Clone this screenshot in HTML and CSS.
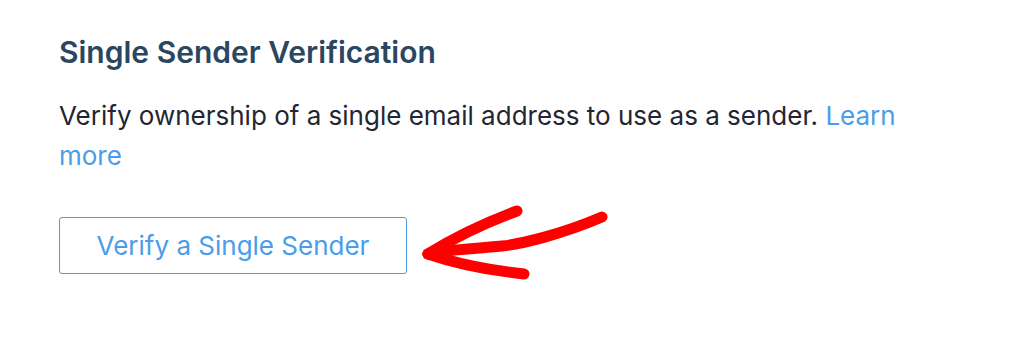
FILE: index.html
```html
<!DOCTYPE html>
<html lang="en">
<head>
<meta charset="utf-8">
<link rel="stylesheet" href="styles.css">
</head>
<body>
<main class="panel">
  <h2 class="title">Single Sender Verification</h2>
  <p class="desc">Verify ownership of a single email address to use as a sender. <a class="link" href="#">Learn more</a></p>
  <div class="action">
    <button class="btn" type="button">Verify a Single Sender</button>
    <svg class="arrow" width="200" height="90" viewBox="0 0 200 90" aria-hidden="true">
      <path d="M190 23 C150 40 110 50 90 52 C60 55 30 56 16 60" />
      <path d="M16 60 C40 45 70 30 105 17" />
      <path d="M16 60 C45 70 75 76 112 80" />
    </svg>
  </div>
</main>
</body>
</html>
```

FILE: styles.css
```css
html, body {
  margin: 0;
  padding: 0;
  background: #ffffff;
}
body {
  font-family: Inter, "Noto Sans", sans-serif;
  width: 1024px;
  height: 349px;
  overflow: hidden;
}
.panel {
  padding: 32px 0 0 59px;
  width: 860px;
}
.title {
  margin: 0;
  font-size: 30px;
  font-weight: 600;
  line-height: 40px;
  color: #2b4660;
}
.desc {
  margin: 24px 0 0;
  font-size: 26px;
  line-height: 40px;
  color: #1f2634;
}
.link {
  color: #4a9de8;
  text-decoration: none;
}
.action {
  display: flex;
  align-items: center;
  margin-top: 30px;
}
.btn {
  width: 348px;
  height: 57px;
  border: 1.5px solid #4a9de8;
  border-radius: 3px;
  background: #fff;
  color: #4a9de8;
  font-family: Inter, "Noto Sans", sans-serif;
  font-size: 26px;
  padding: 0;
}
.arrow {
  margin-left: 5px;
  margin-top: -12px;
}
.arrow path {
  fill: none;
  stroke: #ff0000;
  stroke-width: 11;
  stroke-linecap: round;
  stroke-linejoin: round;
}
```
